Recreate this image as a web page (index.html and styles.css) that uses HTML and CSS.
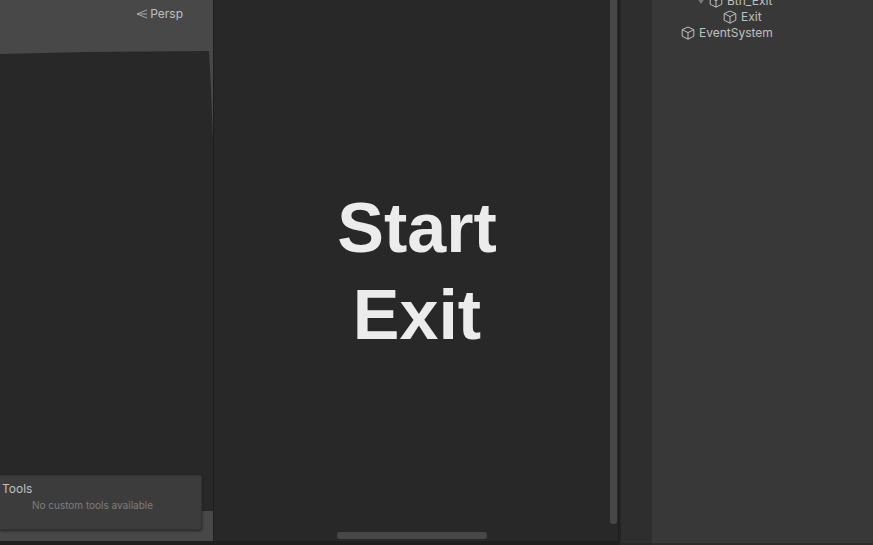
FILE: index.html
```
<!DOCTYPE html>
<html lang="en">
<head>
    <meta charset="UTF-8">
    <meta name="viewport" content="width=device-width, initial-scale=1.0">
    <title>Editor</title>
    <link rel="stylesheet" href="styles.css">
</head>
<body>
    <svg width="0" height="0" class="sprite" aria-hidden="true">
        <symbol id="cube" viewBox="0 0 14 14">
            <path d="M7 1 12.8 3.6V10.2L7 13.2 1.2 10.2V3.6Z M1.2 3.6 7 6.6 12.8 3.6 M7 6.6V13.2"/>
        </symbol>
    </svg>
    <div class="editor">
        <section class="scene">
            <div class="scene-sky">
                <button type="button" class="persp">
                    <svg viewBox="0 0 12 10" aria-hidden="true">
                        <path d="M11 1 1 5 11 9 M1 5H11"/>
                    </svg>
                    Persp
                </button>
            </div>
            <div class="scene-canvas"></div>
            <div class="scene-ground"></div>
            <div class="tools">
                <h2>Tools</h2>
                <p>No custom tools available</p>
            </div>
        </section>

        <main class="game">
            <nav class="menu">
                <button type="button">Start</button>
                <button type="button">Exit</button>
            </nav>
            <div class="scroll-y"></div>
            <div class="scroll-x"></div>
        </main>

        <div class="gutter"></div>

        <aside class="hierarchy">
            <ul>
                <li class="level-2"><span class="arrow"></span><svg aria-hidden="true"><use href="#cube"/></svg>Btn_Exit</li>
                <li class="level-3"><svg aria-hidden="true"><use href="#cube"/></svg>Exit</li>
                <li class="level-1"><svg aria-hidden="true"><use href="#cube"/></svg>EventSystem</li>
            </ul>
        </aside>
    </div>
</body>
</html>
```
FILE: styles.css
```
:root {
    --panel: #383838;
    --dark: #282828;
    --line: #1e1e1e;
    --sky: #484848;
    --thumb: #474747;
    --text: #c0c0c0;
}

* {
    box-sizing: border-box;
}

body {
    margin: 0;
    background: var(--dark);
    color: var(--text);
    font-family: Inter, "Liberation Sans", sans-serif;
    font-size: 12px;
    line-height: 16px;
}

button {
    padding: 0;
    border: none;
    background: none;
    color: inherit;
    font: inherit;
    cursor: pointer;
}

.sprite {
    position: absolute;
}

.editor {
    display: grid;
    grid-template-columns: 214fr 405fr 33fr 221fr;
    height: 100vh;
    overflow: hidden;
}

/* Scene view */
.scene {
    position: relative;
    display: flex;
    flex-direction: column;
    background: var(--sky);
    border-right: 1px solid var(--line);
    border-bottom: 4px solid var(--line);
}

.scene-sky {
    display: flex;
    justify-content: flex-end;
    align-items: flex-start;
    height: 51px;
    padding: 6px 30px 0 0;
}

.persp {
    display: flex;
    align-items: center;
    gap: 2px;
}

.persp svg {
    width: 12px;
    height: 10px;
    fill: none;
    stroke: #a8a8a8;
}

.scene-canvas {
    flex: 1;
    background: var(--dark);
    clip-path: polygon(0 3px, 40% 1px, calc(100% - 4px) 0, calc(100% - 2px) 38px, 100% 90px, 100% 100%, 0 100%);
}

.scene-ground {
    height: 30px;
}

.tools {
    position: absolute;
    left: 0;
    right: 11px;
    bottom: 11px;
    height: 55px;
    padding: 5px 2px;
    background: #3c3c3c;
    border: 1px solid #323232;
    border-left: none;
    border-radius: 0 2px 2px 0;
    box-shadow: 0 1px 3px #222222;
}

.tools h2 {
    margin: 0;
    font-size: 12px;
    font-weight: 400;
}

.tools p {
    margin: 0;
    padding-right: 16px;
    color: #7e7e7e;
    font-size: 10px;
    text-align: center;
}

/* Game view */
.game {
    display: grid;
    grid-template-columns: 1fr 7px;
    grid-template-rows: 1fr 7px;
    padding: 0 1px 2px 0;
    border-right: 1px solid var(--line);
    border-bottom: 4px solid var(--line);
}

.menu {
    display: flex;
    flex-direction: column;
    align-items: center;
    justify-content: center;
    padding: 12px 0 0 10px;
}

.menu button {
    color: #ececec;
    font-family: "Liberation Sans", Arial, sans-serif;
    font-size: 70px;
    font-weight: 700;
    line-height: 87px;
}

.scroll-y,
.scroll-x {
    background: var(--thumb);
    border-radius: 3px;
}

.scroll-y {
    margin-bottom: 8px;
    border-radius: 0 0 3px 3px;
}

.scroll-x {
    width: 38%;
    margin-left: 31%;
}

.gutter {
    background: #2e2e2e;
    border-left: 2px solid #242424;
    border-bottom: 2px solid #282828;
}

/* Hierarchy */
.hierarchy {
    background: var(--panel);
    border-bottom: 2px solid #2c2c2c;
}

.hierarchy ul {
    margin: -7px 0 0;
    padding: 0;
    list-style: none;
}

.hierarchy li {
    display: flex;
    align-items: center;
    gap: 4px;
}

.hierarchy svg {
    width: 14px;
    height: 14px;
    fill: none;
    stroke: var(--text);
}

.level-1 {
    padding-left: 29px;
}

.level-2 {
    padding-left: 45px;
}

.level-3 {
    padding-left: 71px;
}

.arrow {
    border: 4px solid transparent;
    border-top: 6px solid #777777;
    border-bottom: none;
}
```
